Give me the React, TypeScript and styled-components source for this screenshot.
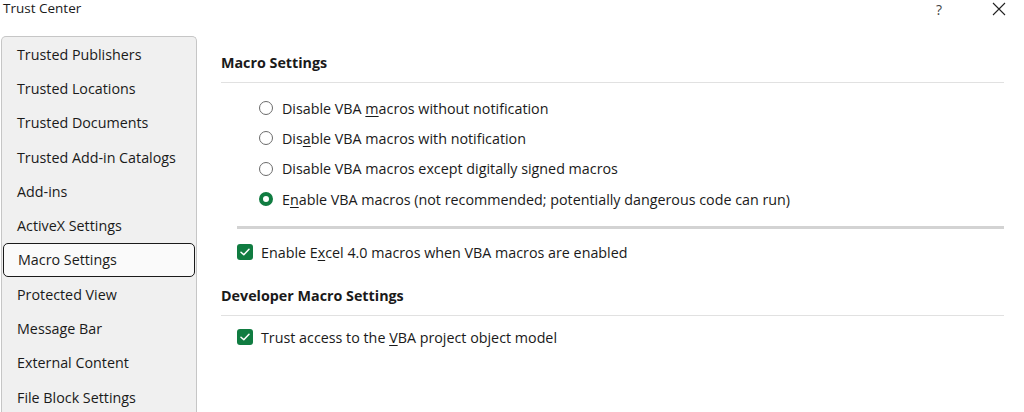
import React from "react";
import styled, { createGlobalStyle } from "styled-components";

const Global = createGlobalStyle`
  html, body { margin: 0; padding: 0; background: #ffffff; }
  body { font-family: "Open Sans", "Noto Sans", sans-serif; color: #1a1a1a; overflow: hidden; }
`;

const Window = styled.div`
  width: 1024px;
  height: 412px;
  display: flex;
  flex-direction: column;
  overflow: hidden;
  background: #ffffff;
`;

const TitleBar = styled.div`
  height: 36px;
  display: flex;
  align-items: flex-start;
  padding-left: 3px;
`;

const Title = styled.div`
  font-size: 13.5px;
  line-height: 17px;
  color: #1a1a1a;
  flex: 1;
`;

const TitleButtons = styled.div`
  display: flex;
  align-items: flex-start;
  gap: 50px;
  margin-right: 18px;
  padding-top: 1px;
`;

const HelpBtn = styled.div`
  font-size: 14px;
  line-height: 17px;
  color: #444;
`;

const CloseIcon = () => (
  <svg width="14" height="14" viewBox="0 0 14 14" style={{ marginTop: 1 }}>
    <path d="M1 1 L13 13 M13 1 L1 13" stroke="#222" strokeWidth="1.1" fill="none" />
  </svg>
);

const Body = styled.div`
  flex: 1;
  display: flex;
  min-height: 0;
`;

const Sidebar = styled.div`
  width: 194px;
  margin-left: 1px;
  background: #f0f0f0;
  border: 1px solid #c6c6c6;
  border-bottom: none;
  border-radius: 5px 5px 0 0;
  display: flex;
  flex-direction: column;
`;

const NavItem = styled.div<{ $active?: boolean }>`
  height: 34.3px;
  flex: none;
  box-sizing: border-box;
  display: flex;
  align-items: center;
  padding-left: ${(p) => (p.$active ? "14px" : "15px")};
  font-size: 14.3px;
  color: #1a1a1a;
  ${(p) =>
    p.$active &&
    `
    margin-left: 1px;
    width: 192px;
    border: 1.5px solid #1a1a1a;
    border-radius: 5px;
    background: #fafafa;
  `}
`;

const Content = styled.div`
  flex: 1;
  padding-left: 24px;
  padding-right: 20px;
  display: flex;
  flex-direction: column;
`;

const SectionTitle = styled.div<{ $top: number }>`
  margin-top: ${(p) => p.$top}px;
  font-weight: 700;
  font-size: 14.3px;
  line-height: 20px;
  padding-bottom: 9px;
  border-bottom: 1px solid #e1e1e1;
`;

const RadioGroup = styled.div`
  display: flex;
  flex-direction: column;
  padding-left: 38px;
  padding-top: 10px;
  padding-bottom: 12px;
`;

const OptionRow = styled.div`
  display: flex;
  align-items: center;
  height: 30.3px;
  font-size: 14.3px;
  color: #1a1a1a;
  gap: 9px;
`;

const RadioCircle = styled.span<{ $checked?: boolean }>`
  width: 14px;
  height: 14px;
  box-sizing: border-box;
  border-radius: 50%;
  border: ${(p) => (p.$checked ? "4px solid #107c41" : "1px solid #6b6b6b")};
  background: #fff;
  flex: none;
`;

const Divider = styled.div`
  margin-left: 16px;
  height: 3px;
  background: #d3d3d3;
`;

const CheckRow = styled.div<{ $top: number }>`
  display: flex;
  align-items: center;
  gap: 8px;
  padding-left: 16px;
  margin-top: ${(p) => p.$top}px;
  height: 20px;
  font-size: 14.3px;
  color: #1a1a1a;
`;

const CheckBox = styled.span`
  width: 16px;
  height: 16px;
  border-radius: 3px;
  background: #107c41;
  display: flex;
  align-items: center;
  justify-content: center;
  flex: none;
`;

const U = styled.span`
  text-decoration: underline;
  text-underline-offset: 2px;
`;

const Check = () => (
  <CheckBox>
    <svg width="10" height="8" viewBox="0 0 10 8">
      <path d="M1 4.2 L3.8 6.8 L9 1.2" stroke="#fff" strokeWidth="1.5" fill="none" strokeLinecap="round" strokeLinejoin="round" />
    </svg>
  </CheckBox>
);

const navItems = [
  "Trusted Publishers",
  "Trusted Locations",
  "Trusted Documents",
  "Trusted Add-in Catalogs",
  "Add-ins",
  "ActiveX Settings",
  "Macro Settings",
  "Protected View",
  "Message Bar",
  "External Content",
  "File Block Settings",
];

export default function App() {
  return (
    <Window>
      <Global />
      <TitleBar>
        <Title>Trust Center</Title>
        <TitleButtons>
          <HelpBtn>?</HelpBtn>
          <CloseIcon />
        </TitleButtons>
      </TitleBar>
      <Body>
        <Sidebar>
          {navItems.map((n) => (
            <NavItem key={n} $active={n === "Macro Settings"}>
              {n}
            </NavItem>
          ))}
        </Sidebar>
        <Content>
          <SectionTitle $top={17}>Macro Settings</SectionTitle>
          <RadioGroup>
            <OptionRow>
              <RadioCircle />
              <span>
                Disable VBA <U>m</U>acros without notification
              </span>
            </OptionRow>
            <OptionRow>
              <RadioCircle />
              <span>
                Dis<U>a</U>ble VBA macros with notification
              </span>
            </OptionRow>
            <OptionRow>
              <RadioCircle />
              <span>
                Disable VBA macros except di<U>g</U>itally signed macros
              </span>
            </OptionRow>
            <OptionRow>
              <RadioCircle $checked />
              <span>
                E<U>n</U>able VBA macros (not recommended; potentially dangerous code can run)
              </span>
            </OptionRow>
          </RadioGroup>
          <Divider />
          <CheckRow $top={13}>
            <Check />
            <span>
              Enable E<U>x</U>cel 4.0 macros when VBA macros are enabled
            </span>
          </CheckRow>
          <SectionTitle $top={24}>Developer Macro Settings</SectionTitle>
          <CheckRow $top={11}>
            <Check />
            <span>
              Trust access to the <U>V</U>BA project object model
            </span>
          </CheckRow>
        </Content>
      </Body>
    </Window>
  );
}
